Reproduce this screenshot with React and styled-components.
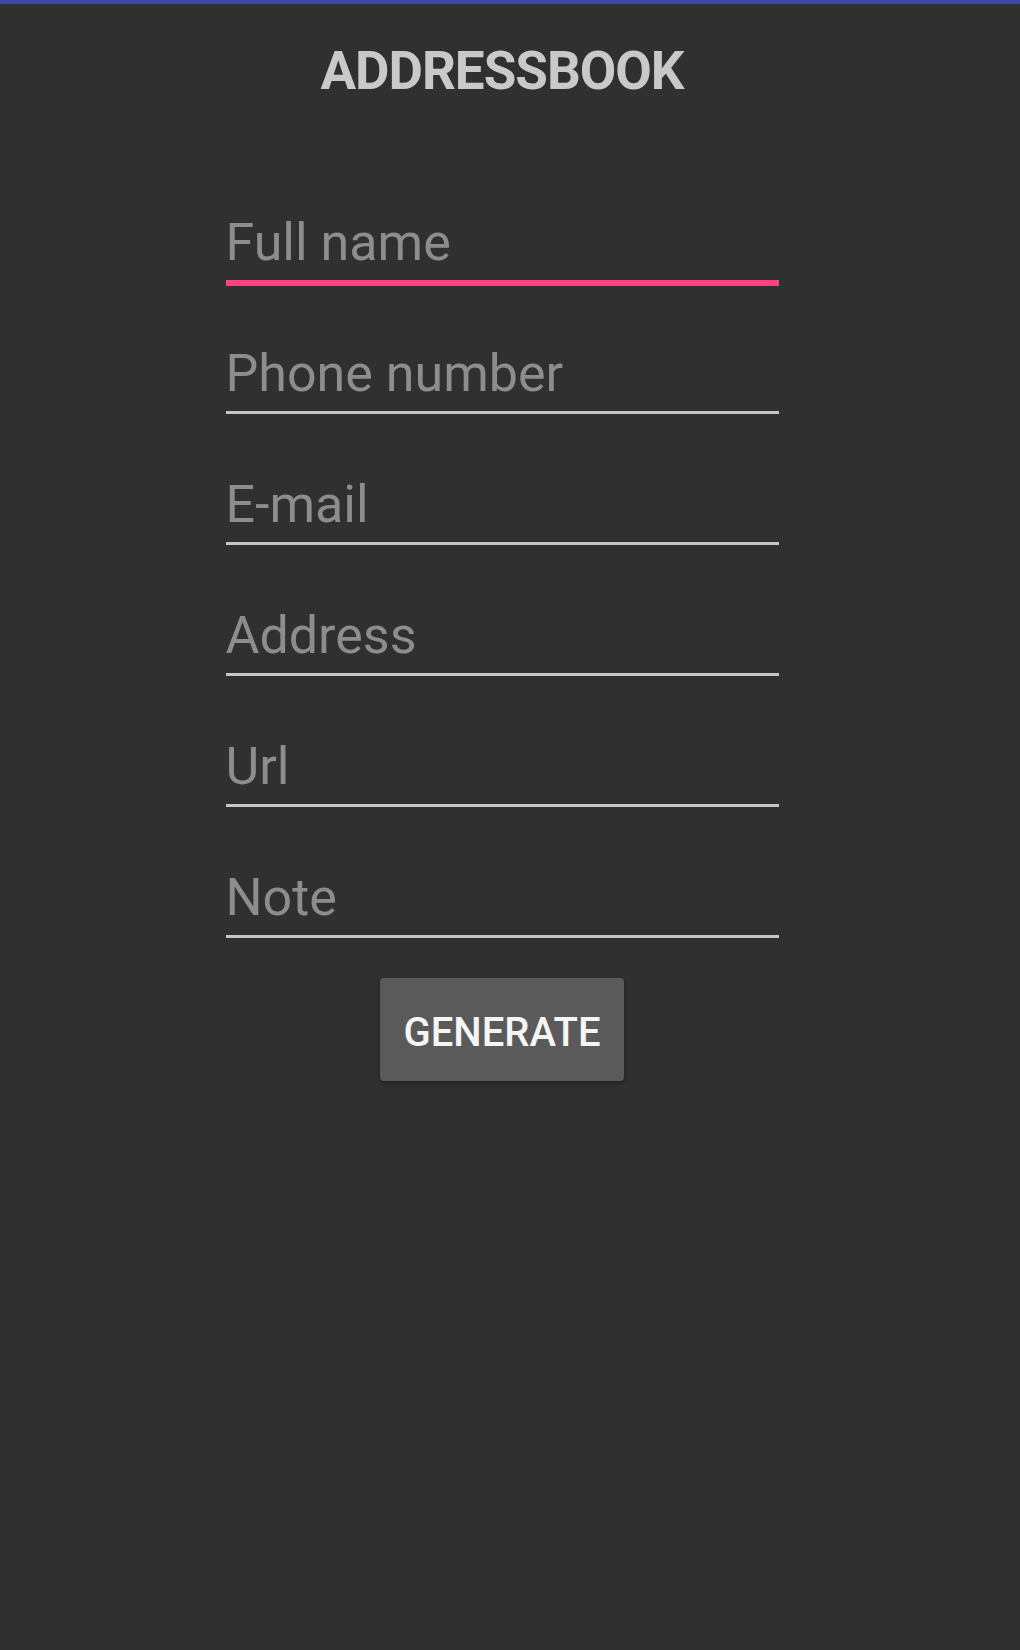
import React from 'react';
import styled, { createGlobalStyle } from 'styled-components';

const GlobalStyle = createGlobalStyle`
  html, body {
    margin: 0;
    padding: 0;
    background: #303030;
  }
  body {
    font-family: Roboto, "Liberation Sans", sans-serif;
  }
`;

const fields = [
  { id: 'name', label: 'Full name', focused: true },
  { id: 'phone', label: 'Phone number' },
  { id: 'email', label: 'E-mail' },
  { id: 'address', label: 'Address' },
  { id: 'url', label: 'Url' },
  { id: 'note', label: 'Note' },
];

const App = () => {
  return (
    <>
      <GlobalStyle />
      <Screen>
        <StatusStrip />
        <Content>
          <Title>ADDRESSBOOK</Title>
          <Form>
            {fields.map((f) => (
              <TextField
                key={f.id}
                type="text"
                placeholder={f.label}
                $focused={f.focused}
              />
            ))}
          </Form>
          <GenerateButton type="button">GENERATE</GenerateButton>
        </Content>
      </Screen>
    </>
  );
};

const Screen = styled.div`
  min-height: 1650px;
  background: #303030;
`;

const StatusStrip = styled.div`
  height: 4px;
  background: #3a47a8;
`;

const Content = styled.div`
  width: 1004px;
  display: flex;
  flex-direction: column;
  align-items: center;
`;

const Title = styled.h1`
  margin: 36px 0 0 0;
  height: 62px;
  line-height: 62px;
  font-size: 53px;
  font-weight: 700;
  letter-spacing: -1px;
  color: #c9c9c9;
  font-family: Roboto, "Liberation Sans", sans-serif;
`;

const Form = styled.div`
  margin-top: 110px;
  width: 553px;
  display: flex;
  flex-direction: column;
  gap: 60px;
`;

const TextField = styled.input`
  display: block;
  width: 100%;
  height: 62px;
  line-height: 62px;
  padding: 0 0 6px 0;
  margin: 0 0 ${(p) => (p.$focused ? '-3px' : '0')} 0;
  box-sizing: content-box;
  border: none;
  border-bottom: ${(p) => (p.$focused ? '6px solid #ff4081' : '3px solid #c6c6c6')};
  background: transparent;
  outline: none;
  font-family: Roboto, "Liberation Sans", sans-serif;
  font-size: 52px;
  color: #e0e0e0;

  &::placeholder {
    color: #8d8d8d;
    opacity: 1;
  }
`;

const GenerateButton = styled.button`
  margin-top: 40px;
  width: 244px;
  height: 103px;
  display: flex;
  align-items: center;
  justify-content: center;
  padding: 5px 0 0 0;
  border: none;
  border-radius: 4px;
  background: #5a5a5b;
  box-shadow: 0 2px 4px rgba(0, 0, 0, 0.35);
  color: #f5f5f5;
  font-family: Roboto, "Liberation Sans", sans-serif;
  font-size: 40px;
  font-weight: 500;
  cursor: pointer;
`;

export default App;
